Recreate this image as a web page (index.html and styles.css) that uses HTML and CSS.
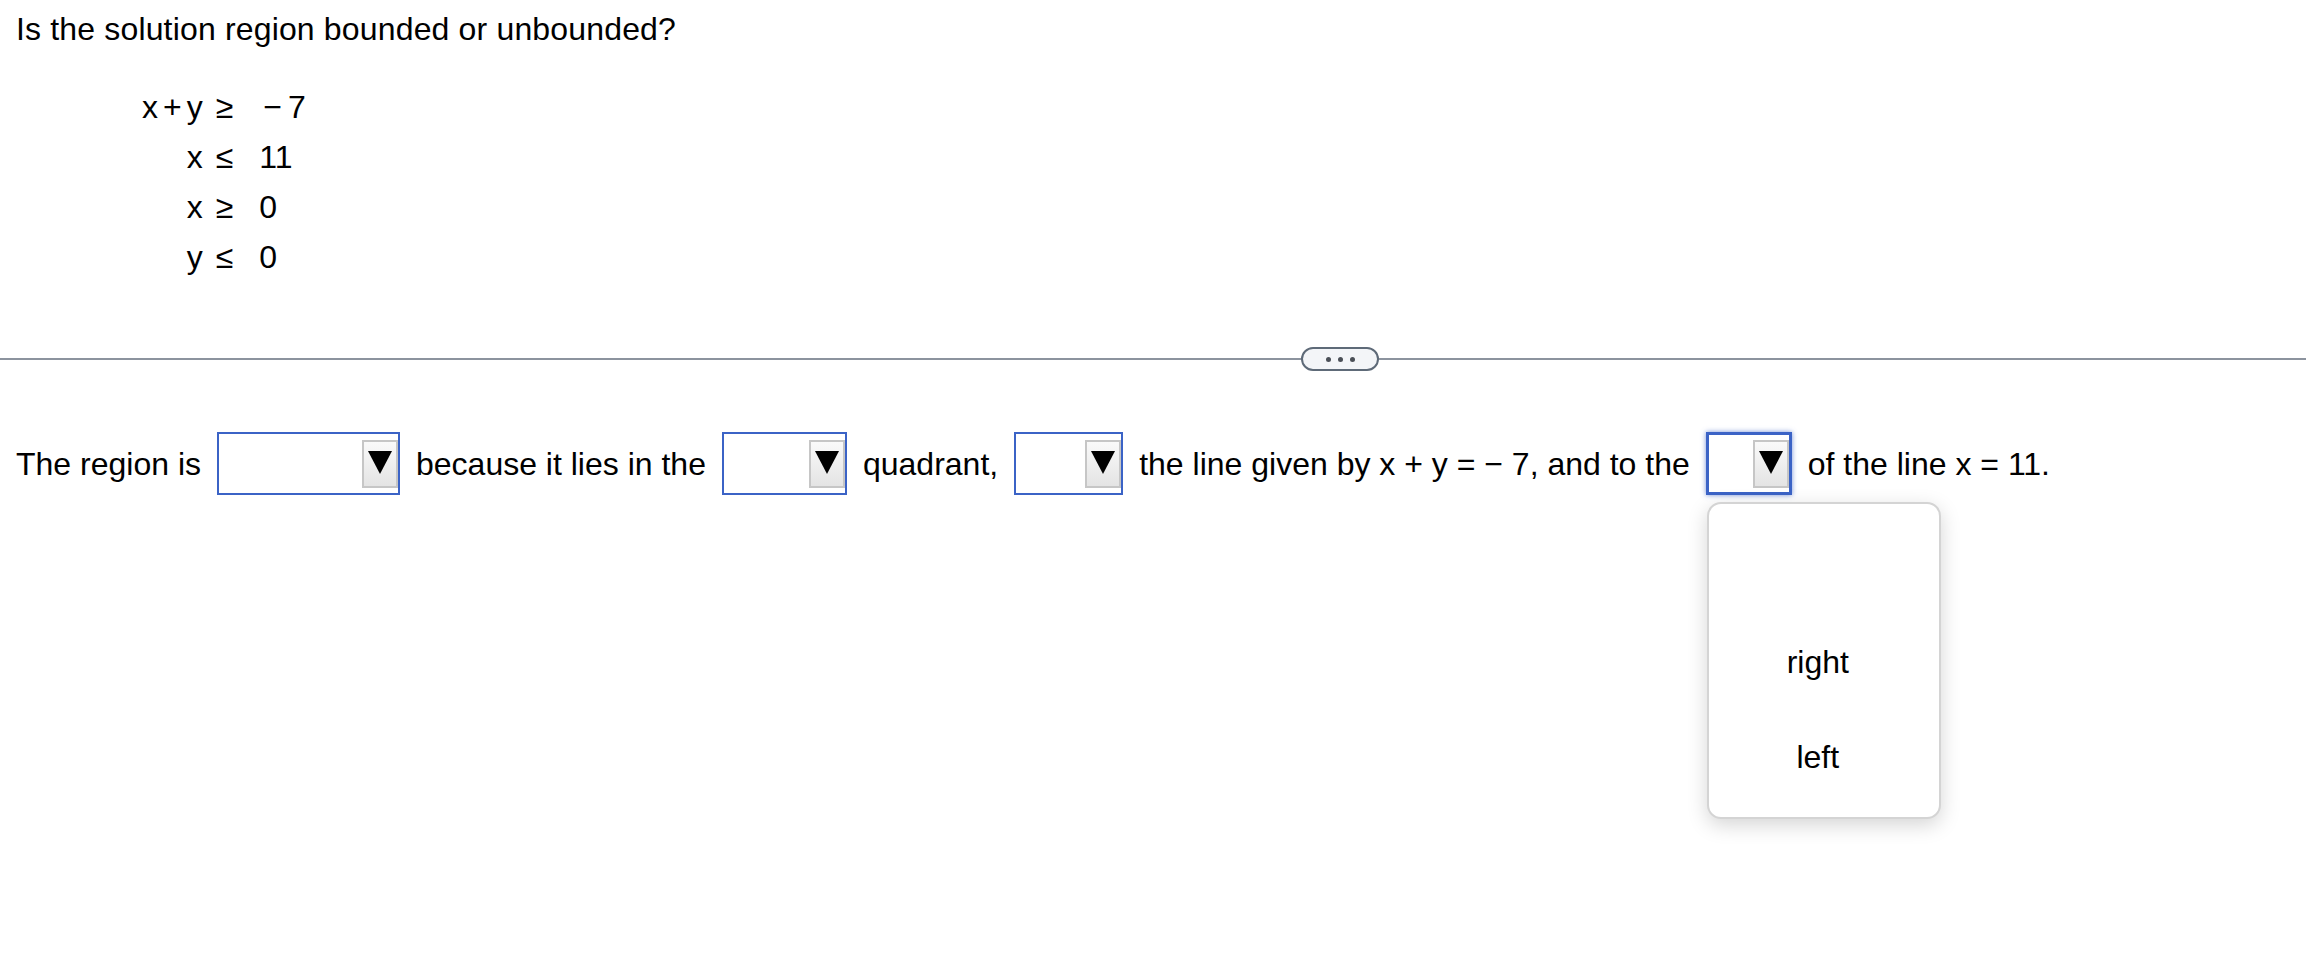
FILE: index.html
```html
<!DOCTYPE html>
<html>
<head>
  <title>Solution Region</title>
  <link rel="stylesheet" href="styles.css">
</head>
<body>
  <div class="question">
    <p class="prompt">Is the solution region bounded or unbounded?</p>
    <div class="system">
      <span class="lhs">x<span class="op">+</span>y</span><span class="rel">≥</span><span class="rhs"><span class="neg">−</span>7</span>
      <span class="lhs">x</span><span class="rel">≤</span><span class="rhs">11</span>
      <span class="lhs">x</span><span class="rel">≥</span><span class="rhs">0</span>
      <span class="lhs">y</span><span class="rel">≤</span><span class="rhs">0</span>
    </div>
  </div>

  <div class="divider">
    <button class="more" type="button"><span></span><span></span><span></span></button>
  </div>

  <div class="answer">
    <span>The region is</span>
    <div class="picker picker-1"><span class="arrow"></span></div>
    <span>because it lies in the</span>
    <div class="picker picker-2"><span class="arrow"></span></div>
    <span>quadrant,</span>
    <div class="picker picker-3"><span class="arrow"></span></div>
    <span>the line given by x + y = − 7, and to the</span>
    <div class="slot">
      <div class="picker picker-4 focused"><span class="arrow"></span></div>
      <div class="menu">
        <div class="option"></div>
        <div class="option">right</div>
        <div class="option">left</div>
      </div>
    </div>
    <span>of the line x = 11.</span>
  </div>
</body>
</html>
```

FILE: styles.css
```css
html, body {
  min-height: 100vh;
}

body {
  font-family: "Liberation Sans", Arial, sans-serif;
  font-size: 32px;
  color: #000;
  background-color: #fff;
  margin: 0;
  padding: 0;
}

.question {
  padding: 11px 16px 0;
}

.prompt {
  margin: 0 0 35px;
  line-height: 36px;
  letter-spacing: 0.16px;
}

.system {
  display: grid;
  grid-template-columns: auto auto auto;
  grid-auto-rows: 50px;
  line-height: 50px;
  margin-left: 126px;
  justify-content: start;
}

.lhs {
  justify-self: end;
}

.op {
  padding: 0 5px;
}

.rel {
  padding: 0 26px 0 13px;
}

.neg {
  margin: 0 6px 0 4px;
}

.divider {
  position: relative;
  height: 2px;
  margin-top: 76px;
  background-color: #8c939e;
}

.more {
  position: absolute;
  left: 1301px;
  top: -11px;
  width: 78px;
  height: 24px;
  padding: 0;
  border: 2px solid #5e6a78;
  border-radius: 12px;
  background-color: #f3f5f8;
  display: flex;
  justify-content: center;
  align-items: center;
  gap: 7px;
}

.more span {
  width: 5px;
  height: 5px;
  border-radius: 50%;
  background-color: #4a4f57;
}

.answer {
  display: flex;
  align-items: center;
  gap: 16px;
  margin-top: 72px;
  padding-left: 16px;
  line-height: 36px;
  white-space: nowrap;
}

.slot {
  position: relative;
}

.picker {
  box-sizing: border-box;
  height: 63px;
  border: 2px solid #3b63c6;
  background-color: #fff;
  display: flex;
  justify-content: flex-end;
  align-items: center;
}

.picker-1 { width: 183px; }
.picker-2 { width: 125px; }
.picker-3 { width: 109px; }
.picker-4 { width: 86px; }

.picker.focused {
  border-width: 3px;
  box-shadow: 0 0 5px rgba(59, 99, 198, 0.7);
}

.arrow {
  box-sizing: border-box;
  width: 36px;
  height: 48px;
  border: 2px solid #c6c6c6;
  background: linear-gradient(#fafafa, #e4e4e4);
  display: flex;
  justify-content: center;
  align-items: center;
}

.arrow::before {
  content: "";
  border-left: 12px solid transparent;
  border-right: 12px solid transparent;
  border-top: 23px solid #000;
  margin-top: -2px;
}

.menu {
  position: absolute;
  top: 70px;
  left: 1px;
  z-index: 5;
  box-sizing: border-box;
  width: 234px;
  padding: 16px 12px 12px 0;
  background-color: #fff;
  border: 2px solid #d4d4d4;
  border-radius: 14px;
  box-shadow: 0 6px 20px rgba(0, 0, 0, 0.17);
}

.option {
  height: 95px;
  line-height: 95px;
  text-align: center;
}
```
